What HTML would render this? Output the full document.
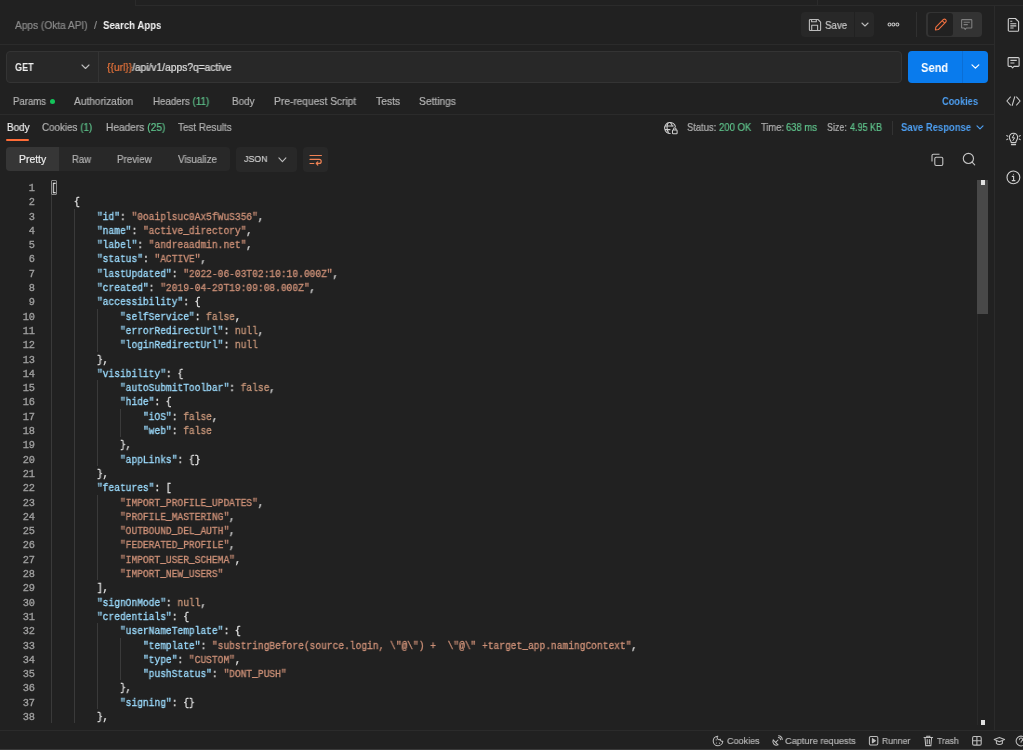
<!DOCTYPE html>
<html><head><meta charset="utf-8">
<style>
*{margin:0;padding:0;box-sizing:border-box}
html,body{width:1023px;height:750px;overflow:hidden;background:#212121}
body{position:relative;font-family:"Liberation Sans",sans-serif;color:#a6a6a6}
.a{position:absolute}
.t{position:absolute;white-space:nowrap;will-change:transform;-webkit-text-stroke:0.2px currentColor}
.hl{position:absolute;height:1px;background:#2f2f2f}
.vl{position:absolute;width:1px;background:#2f2f2f}
.g{color:#5fc48c}
pre{font:inherit;margin:0;will-change:transform;-webkit-text-stroke:0.3px currentColor}
#code{position:absolute;left:0;top:0;font-family:"Liberation Mono",monospace;font-size:10.3px;line-height:14.3px;white-space:pre;color:#e2e2e2}
.ln{position:absolute;left:0;width:35px;text-align:right;color:#a0a0a0}
.k{color:#9cdcfe}
.s{color:#ce9178}
.n{color:#c9977a}
.guide{position:absolute;width:1px;background:#3a3a3a}
svg{position:absolute;overflow:visible}

</style></head><body>
<!-- top tab strip -->
<div class="hl" style="left:136px;top:5px;width:887px;background:#2b2b2b"></div>
<div class="vl" style="left:135px;top:0;height:6px;background:#2b2b2b"></div>
<div class="vl" style="left:817px;top:0;height:6px;background:#2b2b2b"></div>
<!-- save group -->
<div class="a" style="left:801px;top:12px;width:53px;height:25px;background:#282828;border-radius:4px 0 0 4px"></div>
<div class="a" style="left:855px;top:12px;width:19px;height:25px;background:#282828;border-radius:0 4px 4px 0"></div>
<svg style="left:808px;top:18px" width="14" height="14" viewBox="0 0 14 14" fill="none" stroke="#bdbdbd" stroke-width="1.1" stroke-linejoin="round">
<path d="M2.3,1.5 H10 L12.6,4.1 V11.6 A0.9,0.9 0 0 1 11.7,12.5 H2.3 A0.9,0.9 0 0 1 1.4,11.6 V2.4 A0.9,0.9 0 0 1 2.3,1.5 Z"/>
<path d="M3.6,1.6 V3.7 H8.3 V1.6"/>
<path d="M3.7,12.4 V7.3 H9.6 V12.4"/>
</svg>
<svg style="left:860px;top:21px" width="10" height="7" viewBox="0 0 10 7" fill="none" stroke="#bdbdbd" stroke-width="1.05" stroke-linecap="round" stroke-linejoin="round"><path d="M1.9,2 L5,5 L8.1,2"/></svg>
<svg style="left:885px;top:20px" width="16" height="9" viewBox="0 0 16 9" fill="none" stroke="#c4c4c4" stroke-width="1.1"><circle cx="4.5" cy="4.5" r="1.45"/><circle cx="8.4" cy="4.5" r="1.45"/><circle cx="12.4" cy="4.5" r="1.45"/></svg>
<div class="vl" style="left:916px;top:12px;height:25px;background:#303030"></div>
<div class="a" style="left:926px;top:12px;width:56px;height:25px;background:#333333;border-radius:4px"></div>
<div class="a" style="left:928px;top:13px;width:25px;height:23px;background:#212121;border-radius:3px"></div>
<svg style="left:933px;top:18px" width="15" height="14" viewBox="0 0 15 14" fill="none" stroke="#f07040" stroke-width="1.1" stroke-linejoin="round">
<g transform="translate(7.5,6.9) rotate(-45)"><path d="M-7.2,0 L-4.8,-1.75 H5.6 A1.75,1.75 0 0 1 5.6,1.75 H-4.8 Z"/><path d="M4.2,-1.7 V1.7"/></g>
</svg>
<svg style="left:960px;top:18px" width="14" height="14" viewBox="0 0 14 14" fill="none" stroke="#7f7f7f" stroke-width="1.1" stroke-linejoin="round">
<path d="M2.2,1.6 H11.2 A0.6,0.6 0 0 1 11.8,2.2 V9.4 A0.6,0.6 0 0 1 11.2,10 H6.4 L5.2,11.4 L4.2,10 H2.2 A0.6,0.6 0 0 1 1.6,9.4 V2.2 A0.6,0.6 0 0 1 2.2,1.6 Z"/>
<path d="M3.6,4.2 H9.8 M3.6,6.6 H7.8"/>
</svg>
<!-- header bottom border -->
<div class="hl" style="left:0;top:44px;width:994px;background:#2b2b2b"></div>
<!-- sidebar border -->
<div class="vl" style="left:994px;top:5px;height:725px;background:#2b2b2b"></div>
<!-- sidebar icons -->
<svg style="left:1006px;top:17px" width="15" height="16" viewBox="0 0 15 16" fill="none" stroke="#cfcfcf" stroke-width="1.1" stroke-linejoin="round">
<path d="M3.4,1.5 H9.4 L12.6,4.7 V13.2 A1.1,1.1 0 0 1 11.5,14.3 H3.4 A1.1,1.1 0 0 1 2.3,13.2 V2.6 A1.1,1.1 0 0 1 3.4,1.5 Z"/>
<path d="M4.3,4.2 H6.3 M4.3,6.8 H10.3 M4.3,8.9 H10.3 M4.3,11 H7.6"/>
</svg>
<svg style="left:1006px;top:55px" width="15" height="15" viewBox="0 0 15 15" fill="none" stroke="#cfcfcf" stroke-width="1.1" stroke-linejoin="round">
<path d="M3,2.6 H12.2 A0.9,0.9 0 0 1 13.1,3.5 V10.5 A0.9,0.9 0 0 1 12.2,11.4 H8 L6.6,12.8 L5.3,11.4 H3 A0.9,0.9 0 0 1 2.1,10.5 V3.5 A0.9,0.9 0 0 1 3,2.6 Z"/>
<path d="M4.4,5.4 H10.8 M4.4,8 H8.4"/>
</svg>
<svg style="left:1005px;top:95px" width="17" height="12" viewBox="0 0 17 12" fill="none" stroke="#cfcfcf" stroke-width="1.1" stroke-linecap="round" stroke-linejoin="round">
<path d="M5.4,2 L1.9,6 L5.4,10 M11.6,2 L15.1,6 L11.6,10 M9.8,1.7 L7.2,10.4"/>
</svg>
<svg style="left:1005px;top:131px" width="17" height="16" viewBox="0 0 17 16" fill="none" stroke="#cfcfcf" stroke-width="1.1" stroke-linecap="round" stroke-linejoin="round">
<path d="M6.2,11.6 C6.2,9.8 4.4,9 4.4,6.3 A4.1,4.1 0 0 1 12.6,6.3 C12.6,9 10.8,9.8 10.8,11.6 Z"/>
<path d="M6.4,13.6 H10.6"/>
<path d="M9,3.6 L7.2,6.8 H9.6 L7.9,9.6" stroke-width="1"/>
<path d="M1.8,4.6 L2.8,5.2 M1.8,8.6 L2.8,8 M15.2,4.6 L14.2,5.2 M15.2,8.6 L14.2,8"/>
</svg>
<svg style="left:1005px;top:169px" width="17" height="17" viewBox="0 0 17 17" fill="none" stroke="#cfcfcf" stroke-width="1.1">
<circle cx="8.4" cy="8.4" r="6.4"/>
<path d="M7.3,7.4 H8.6 V11.6 M7.2,11.6 H10" stroke-linecap="round"/>
<circle cx="8.5" cy="5.3" r="0.5" fill="#cfcfcf" stroke="none"/>
</svg>
<!-- URL row -->
<div class="a" style="left:6px;top:51px;width:896px;height:32px;background:#282828;border:1px solid #343434;border-radius:4px"></div>
<div class="vl" style="left:98px;top:52px;height:30px;background:#343434"></div>
<svg style="left:80px;top:63px" width="11" height="8" viewBox="0 0 11 8" fill="none" stroke="#bdbdbd" stroke-width="1.1" stroke-linecap="round" stroke-linejoin="round"><path d="M2,2 L5.5,5.5 L9,2"/></svg>
<div class="a" style="left:908px;top:51px;width:80px;height:32px;background:#097bed;border-radius:4px"></div>
<div class="vl" style="left:962px;top:51px;height:32px;background:#0b6ed4"></div>
<svg style="left:970px;top:63px" width="11" height="8" viewBox="0 0 11 8" fill="none" stroke="#ffffff" stroke-width="1.2" stroke-linecap="round" stroke-linejoin="round"><path d="M2,1.8 L5.4,5.2 L8.8,1.8"/></svg>
<!-- request tabs -->
<div class="a" style="left:49.5px;top:99px;width:5px;height:5px;border-radius:50%;background:#14c45a"></div>
<div class="hl" style="left:0;top:114px;width:994px;background:#2b2b2b"></div>
<!-- response tabs -->
<div class="a" style="left:6px;top:139px;width:23px;height:2px;background:#ff6c37;border-radius:1px"></div>
<svg style="left:663px;top:121px" width="16" height="14" viewBox="0 0 16 14" fill="none" stroke="#cfcfcf" stroke-width="1.05">
<path d="M12.5,5.8 A5.5,5.5 0 1 0 7.6,12.5"/>
<path d="M5.2,1.8 C3.6,4.2 3.6,9.2 5.6,11.8 M1.9,5 H10.6 M2,8.6 H7.4"/>
<path d="M7.4,1.6 C8.6,3 9.2,4.2 9.4,5.4"/>
<rect x="9.5" y="9" width="4.6" height="3.7" rx="0.7"/>
<path d="M10.6,9 V8 A1.2,1.2 0 0 1 13,8 V9"/>
</svg>
<div class="vl" style="left:892px;top:121px;height:14px;background:#333"></div>
<svg style="left:975px;top:124px" width="10" height="7" viewBox="0 0 10 7" fill="none" stroke="#4d9ef0" stroke-width="1.2" stroke-linecap="round" stroke-linejoin="round"><path d="M2,1.8 L5,4.8 L8,1.8"/></svg>
<!-- segmented -->
<div class="a" style="left:6px;top:147px;width:224px;height:24px;background:#282828;border-radius:4px"></div>
<div class="a" style="left:6px;top:147px;width:53px;height:24px;background:#363636;border-radius:4px 0 0 4px"></div>
<div class="a" style="left:236px;top:147px;width:61px;height:25px;background:#282828;border-radius:4px"></div>
<svg style="left:277px;top:156px" width="10" height="8" viewBox="0 0 10 8" fill="none" stroke="#bdbdbd" stroke-width="1.1" stroke-linecap="round" stroke-linejoin="round"><path d="M1.9,1.8 L5.4,5.6 L8.9,1.8"/></svg>
<div class="a" style="left:303px;top:147px;width:25px;height:25px;background:#282828;border-radius:4px"></div>
<svg style="left:308px;top:153px" width="16" height="14" viewBox="0 0 16 14" fill="none" stroke="#f08254" stroke-width="1.2" stroke-linecap="round" stroke-linejoin="round">
<path d="M2,2.5 H13.4 M2,6.4 H11.2 A2,2 0 0 1 11.2,10.4 H8.6 M2,10.5 H5.8"/>
<path d="M9.8,8.8 L8.2,10.4 L9.8,12"/>
</svg>
<svg style="left:929px;top:152px" width="16" height="16" viewBox="0 0 16 16" fill="none" stroke="#c4c4c4" stroke-width="1.1" stroke-linejoin="round">
<path d="M3,9.6 V3.6 A1.4,1.4 0 0 1 4.4,2.2 H10.5"/>
<rect x="5.8" y="5.2" width="8" height="8.3" rx="1.4"/>
</svg>
<svg style="left:961px;top:151px" width="16" height="16" viewBox="0 0 16 16" fill="none" stroke="#c4c4c4" stroke-width="1.15" stroke-linecap="round">
<circle cx="7.4" cy="7.4" r="5.1"/>
<path d="M11.1,11.1 L13.7,13.8"/>
</svg>
<!-- scrollbar -->
<div class="a" style="left:977px;top:180px;width:1px;height:545px;background:#2a2a2a"></div>
<div class="a" style="left:977px;top:180px;width:11px;height:134px;background:#484848"></div>
<div class="a" style="left:981px;top:180px;width:4px;height:5px;background:#e0e0e0"></div>
<div class="a" style="left:981px;top:720px;width:4px;height:5px;background:#e0e0e0"></div>
<!-- bottom bar -->
<div class="hl" style="left:0;top:730px;width:1023px;background:#2b2b2b"></div>
<div class="hl" style="left:0;top:749px;width:1023px;background:#3a3a3a"></div>
<svg style="left:712px;top:735px" width="12" height="12" viewBox="0 0 12 12" fill="none" stroke="#bdbdbd" stroke-width="1.05" stroke-linejoin="round">
<path d="M5.8,1.2 A4.8,4.8 0 1 0 10.8,6.2 A1.8,1.8 0 0 1 8.4,4.2 A1.8,1.8 0 0 1 5.8,1.2 Z"/>
<circle cx="4.2" cy="4.8" r="0.6" fill="#bdbdbd" stroke="none"/><circle cx="4.4" cy="8" r="0.6" fill="#bdbdbd" stroke="none"/><circle cx="7.5" cy="8.2" r="0.6" fill="#bdbdbd" stroke="none"/>
</svg>
<svg style="left:771px;top:735px" width="12" height="12" viewBox="0 0 12 12" fill="none" stroke="#bdbdbd" stroke-width="1.05" stroke-linecap="round">
<path d="M2.2,5 A3.6,3.6 0 0 0 7,9.8 Z"/>
<path d="M4.6,7.4 L7,5"/>
<path d="M7.4,2.4 A2.2,2.2 0 0 1 9.6,4.6 M7.6,0.8 A3.6,3.6 0 0 1 11.2,4.4"/>
</svg>
<svg style="left:868px;top:735px" width="11" height="11" viewBox="0 0 11 11" fill="none" stroke="#bdbdbd" stroke-width="1.05" stroke-linejoin="round">
<rect x="1.4" y="1.4" width="8.4" height="8.6" rx="1.4"/>
<path d="M4.4,3.6 L7.4,5.7 L4.4,7.8 Z" fill="#bdbdbd"/>
</svg>
<svg style="left:923px;top:735px" width="11" height="12" viewBox="0 0 11 12" fill="none" stroke="#bdbdbd" stroke-width="1.05" stroke-linecap="round">
<path d="M1,2.4 H9.6 M3.8,2.4 V1.2 H6.8 V2.4 M2,2.6 L2.7,10.6 H7.9 L8.6,2.6 M4.2,4.4 V8.8 M6.4,4.4 V8.8"/>
</svg>
<svg style="left:971px;top:735px" width="12" height="12" viewBox="0 0 12 12" fill="none" stroke="#bdbdbd" stroke-width="1.1">
<rect x="1.6" y="1.5" width="8.6" height="8.6" rx="1.4"/>
<path d="M5.9,1.6 V10 M1.7,5.8 H10.1"/>
</svg>
<svg style="left:993px;top:736px" width="13" height="10" viewBox="0 0 13 10" fill="none" stroke="#bdbdbd" stroke-width="1.05" stroke-linejoin="round">
<path d="M1.2,3.6 L6.4,1.4 L11.6,3.6 L6.4,5.8 Z"/>
<path d="M3.4,4.6 V7.4 C4.8,8.8 8,8.8 9.4,7.4 V4.6"/>
</svg>
<svg style="left:1014px;top:735px" width="12" height="12" viewBox="0 0 12 12" fill="none" stroke="#bdbdbd" stroke-width="1.05">
<circle cx="7" cy="6" r="4.9"/>
<path d="M5.4,4.6 A1.6,1.6 0 1 1 7.6,6 C7,6.3 7,6.8 7,7.2" stroke-linecap="round"/>
</svg>

<div id="code">
<div class="guide" style="left:51.0px;top:194.3px;height:529.1px"></div><div class="guide" style="left:73.9px;top:208.6px;height:514.8px"></div><div class="guide" style="left:96.8px;top:308.7px;height:42.9px"></div><div class="guide" style="left:96.8px;top:380.2px;height:85.8px"></div><div class="guide" style="left:96.8px;top:494.6px;height:85.8px"></div><div class="guide" style="left:96.8px;top:623.3px;height:85.8px"></div><div class="guide" style="left:119.6px;top:408.8px;height:28.6px"></div><div class="guide" style="left:119.6px;top:637.6px;height:42.9px"></div>
<div class="a" style="left:51px;top:180px;width:6px;height:15px;border:1px solid #8a8a8a;border-radius:1px"></div>
<pre class="ln" style="top:181px">1
2
3
4
5
6
7
8
9
10
11
12
13
14
15
16
17
18
19
20
21
22
23
24
25
26
27
28
29
30
31
32
33
34
35
36
37
38</pre>
<pre class="a cd" style="left:50.5px;top:181px;transform:scaleX(0.930);transform-origin:0 0">[
    {
        <span class="k">&quot;id&quot;</span>: <span class="s">&quot;0oaiplsuc0Ax5fWuS356&quot;</span>,
        <span class="k">&quot;name&quot;</span>: <span class="s">&quot;active_directory&quot;</span>,
        <span class="k">&quot;label&quot;</span>: <span class="s">&quot;andreaadmin.net&quot;</span>,
        <span class="k">&quot;status&quot;</span>: <span class="s">&quot;ACTIVE&quot;</span>,
        <span class="k">&quot;lastUpdated&quot;</span>: <span class="s">&quot;2022-06-03T02:10:10.000Z&quot;</span>,
        <span class="k">&quot;created&quot;</span>: <span class="s">&quot;2019-04-29T19:09:08.000Z&quot;</span>,
        <span class="k">&quot;accessibility&quot;</span>: {
            <span class="k">&quot;selfService&quot;</span>: <span class="n">false</span>,
            <span class="k">&quot;errorRedirectUrl&quot;</span>: <span class="n">null</span>,
            <span class="k">&quot;loginRedirectUrl&quot;</span>: <span class="n">null</span>
        },
        <span class="k">&quot;visibility&quot;</span>: {
            <span class="k">&quot;autoSubmitToolbar&quot;</span>: <span class="n">false</span>,
            <span class="k">&quot;hide&quot;</span>: {
                <span class="k">&quot;iOS&quot;</span>: <span class="n">false</span>,
                <span class="k">&quot;web&quot;</span>: <span class="n">false</span>
            },
            <span class="k">&quot;appLinks&quot;</span>: {}
        },
        <span class="k">&quot;features&quot;</span>: [
            <span class="s">&quot;IMPORT_PROFILE_UPDATES&quot;</span>,
            <span class="s">&quot;PROFILE_MASTERING&quot;</span>,
            <span class="s">&quot;OUTBOUND_DEL_AUTH&quot;</span>,
            <span class="s">&quot;FEDERATED_PROFILE&quot;</span>,
            <span class="s">&quot;IMPORT_USER_SCHEMA&quot;</span>,
            <span class="s">&quot;IMPORT_NEW_USERS&quot;</span>
        ],
        <span class="k">&quot;signOnMode&quot;</span>: <span class="n">null</span>,
        <span class="k">&quot;credentials&quot;</span>: {
            <span class="k">&quot;userNameTemplate&quot;</span>: {
                <span class="k">&quot;template&quot;</span>: <span class="s">&quot;substringBefore(source.login, \&quot;@\&quot;) +  \&quot;@\&quot; +target_app.namingContext&quot;</span>,
                <span class="k">&quot;type&quot;</span>: <span class="s">&quot;CUSTOM&quot;</span>,
                <span class="k">&quot;pushStatus&quot;</span>: <span class="s">&quot;DONT_PUSH&quot;</span>
            },
            <span class="k">&quot;signing&quot;</span>: {}
        },</pre>
</div>
<div class="t" id="crumb1" style="left:14.80px;top:20.09px;font-size:10.70px;transform:scaleX(0.9487);transform-origin:0 0;line-height:10.70px;font-weight:normal;color:#8c8c8c">Apps (Okta API)</div>
<div class="t" id="slash" style="left:93.50px;top:20.09px;font-size:10.70px;transform:scaleX(1.0000);transform-origin:0 0;line-height:10.70px;font-weight:normal;color:#8c8c8c">/</div>
<div class="t" id="crumb2" style="left:102.90px;top:20.09px;font-size:10.70px;transform:scaleX(0.8985);transform-origin:0 0;line-height:10.70px;font-weight:bold;-webkit-text-stroke:0;color:#f2f2f2">Search Apps</div>
<div class="t" id="save" style="left:824.50px;top:19.89px;font-size:10.60px;transform:scaleX(0.9167);transform-origin:0 0;line-height:10.60px;font-weight:normal;color:#c8c8c8">Save</div>
<div class="t" id="get" style="left:15.10px;top:61.69px;font-size:10.60px;transform:scaleX(0.8554);transform-origin:0 0;line-height:10.60px;font-weight:bold;-webkit-text-stroke:0;color:#f0f0f0">GET</div>
<div class="t" id="url" style="left:106.70px;top:62.68px;font-size:10.40px;transform:scaleX(0.9857);transform-origin:0 0;line-height:10.40px;font-weight:normal;color:#e0e0e0"><span style="color:#e8743b">{{url}}</span>/api/v1/apps?q=active</div>
<div class="t" id="send" style="left:921.30px;top:61.57px;font-size:12.20px;transform:scaleX(0.9112);transform-origin:0 0;line-height:12.20px;font-weight:bold;-webkit-text-stroke:0;color:#ffffff">Send</div>
<div class="t" id="params" style="left:13.30px;top:96.88px;font-size:10.40px;transform:scaleX(0.9225);transform-origin:0 0;line-height:10.40px;font-weight:normal;color:#b3b3b3">Params</div>
<div class="t" id="auth" style="left:74.30px;top:96.88px;font-size:10.40px;transform:scaleX(0.9769);transform-origin:0 0;line-height:10.40px;font-weight:normal;color:#b3b3b3">Authorization</div>
<div class="t" id="hdr" style="left:152.50px;top:96.88px;font-size:10.40px;transform:scaleX(0.9370);transform-origin:0 0;line-height:10.40px;font-weight:normal;color:#b3b3b3">Headers <span class="g">(11)</span></div>
<div class="t" id="body" style="left:231.90px;top:96.88px;font-size:10.40px;transform:scaleX(0.9508);transform-origin:0 0;line-height:10.40px;font-weight:normal;color:#b3b3b3">Body</div>
<div class="t" id="prs" style="left:274.10px;top:96.88px;font-size:10.40px;transform:scaleX(0.9810);transform-origin:0 0;line-height:10.40px;font-weight:normal;color:#b3b3b3">Pre-request Script</div>
<div class="t" id="tests" style="left:376.30px;top:96.88px;font-size:10.40px;transform:scaleX(0.9924);transform-origin:0 0;line-height:10.40px;font-weight:normal;color:#b3b3b3">Tests</div>
<div class="t" id="settings" style="left:418.90px;top:96.88px;font-size:10.40px;transform:scaleX(0.9843);transform-origin:0 0;line-height:10.40px;font-weight:normal;color:#b3b3b3">Settings</div>
<div class="t" id="cookies" style="left:941.90px;top:96.88px;font-size:10.40px;transform:scaleX(0.8905);transform-origin:0 0;line-height:10.40px;font-weight:bold;-webkit-text-stroke:0;color:#4d9ef0">Cookies</div>
<div class="t" id="rbody" style="left:6.70px;top:123.31px;font-size:10.40px;transform:scaleX(0.9506);transform-origin:0 0;line-height:10.40px;font-weight:normal;color:#ececec">Body</div>
<div class="t" id="rcookies" style="left:41.90px;top:123.31px;font-size:10.40px;transform:scaleX(0.9436);transform-origin:0 0;line-height:10.40px;font-weight:normal;color:#b3b3b3">Cookies <span class="g">(1)</span></div>
<div class="t" id="rheaders" style="left:105.70px;top:123.31px;font-size:10.40px;transform:scaleX(0.9769);transform-origin:0 0;line-height:10.40px;font-weight:normal;color:#b3b3b3">Headers <span class="g">(25)</span></div>
<div class="t" id="rtest" style="left:178.10px;top:123.31px;font-size:10.40px;transform:scaleX(0.9474);transform-origin:0 0;line-height:10.40px;font-weight:normal;color:#b3b3b3">Test Results</div>
<div class="t" id="status" style="left:687.00px;top:123.31px;font-size:10.40px;transform:scaleX(0.9043);transform-origin:0 0;line-height:10.40px;font-weight:normal;color:#b3b3b3">Status:</div>
<div class="t" id="statusv" style="left:719.00px;top:123.31px;font-size:10.40px;transform:scaleX(0.9176);transform-origin:0 0;line-height:10.40px;font-weight:normal;color:#5fc48c">200 OK</div>
<div class="t" id="time" style="left:760.80px;top:123.31px;font-size:10.40px;transform:scaleX(0.8966);transform-origin:0 0;line-height:10.40px;font-weight:normal;color:#b3b3b3">Time:</div>
<div class="t" id="timev" style="left:786.00px;top:123.31px;font-size:10.40px;transform:scaleX(0.9062);transform-origin:0 0;line-height:10.40px;font-weight:normal;color:#5fc48c">638 ms</div>
<div class="t" id="size" style="left:827.00px;top:123.31px;font-size:10.40px;transform:scaleX(0.8517);transform-origin:0 0;line-height:10.40px;font-weight:normal;color:#b3b3b3">Size:</div>
<div class="t" id="sizev" style="left:850.00px;top:123.31px;font-size:10.40px;transform:scaleX(0.8693);transform-origin:0 0;line-height:10.40px;font-weight:normal;color:#5fc48c">4.95 KB</div>
<div class="t" id="saveresp" style="left:900.50px;top:123.31px;font-size:10.40px;transform:scaleX(0.9118);transform-origin:0 0;line-height:10.40px;font-weight:bold;-webkit-text-stroke:0;color:#4d9ef0">Save Response</div>
<div class="t" id="pretty" style="left:18.90px;top:154.70px;font-size:10.40px;transform:scaleX(1.0014);transform-origin:0 0;line-height:10.40px;font-weight:normal;color:#ececec">Pretty</div>
<div class="t" id="raw" style="left:71.50px;top:154.75px;font-size:10.40px;transform:scaleX(0.9177);transform-origin:0 0;line-height:10.40px;font-weight:normal;color:#b3b3b3">Raw</div>
<div class="t" id="preview" style="left:116.70px;top:154.71px;font-size:10.40px;transform:scaleX(0.9357);transform-origin:0 0;line-height:10.40px;font-weight:normal;color:#b3b3b3">Preview</div>
<div class="t" id="visualize" style="left:177.70px;top:154.71px;font-size:10.40px;transform:scaleX(0.9419);transform-origin:0 0;line-height:10.40px;font-weight:normal;color:#b3b3b3">Visualize</div>
<div class="t" id="json" style="left:243.50px;top:154.23px;font-size:9.90px;transform:scaleX(0.8927);transform-origin:0 0;line-height:9.90px;font-weight:normal;color:#d0d0d0">JSON</div>
<div class="t" id="bcookies" style="left:726.50px;top:735.80px;font-size:9.60px;transform:scaleX(0.9426);transform-origin:0 0;line-height:9.60px;font-weight:normal;color:#b3b3b3">Cookies</div>
<div class="t" id="capture" style="left:784.50px;top:735.80px;font-size:9.60px;transform:scaleX(0.9614);transform-origin:0 0;line-height:9.60px;font-weight:normal;color:#b3b3b3">Capture requests</div>
<div class="t" id="runner" style="left:882.00px;top:735.80px;font-size:9.60px;transform:scaleX(0.8962);transform-origin:0 0;line-height:9.60px;font-weight:normal;color:#b3b3b3">Runner</div>
<div class="t" id="trash" style="left:936.50px;top:735.80px;font-size:9.60px;transform:scaleX(0.8983);transform-origin:0 0;line-height:9.60px;font-weight:normal;color:#b3b3b3">Trash</div>
</body></html>
